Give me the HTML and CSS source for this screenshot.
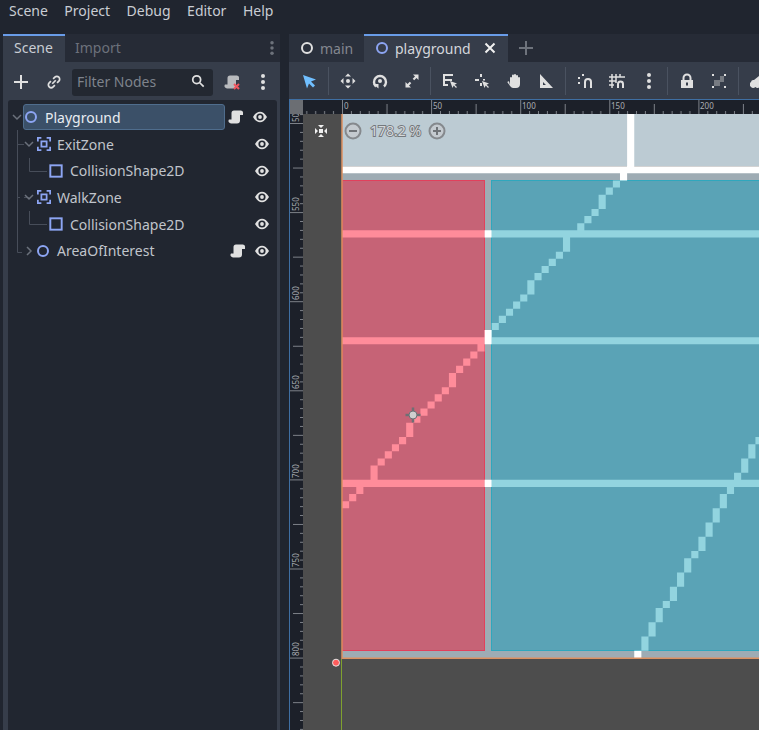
FILE: index.html
```html
<!DOCTYPE html>
<html lang="en">
    <head>
        <meta charset="UTF-8">
        <title>playground</title>
        <link rel="stylesheet" href="styles.css">
    </head>
    <body>
        <svg class="defs" width="0" height="0">
            <defs>
                <symbol id="eye" viewBox="0 0 16 16">
                    <path fill-rule="evenodd" d="M1 8c2-3.6 4.500-5.300 7-5.300s5 1.700 7 5.300c-2 3.600-4.500 5.300-7 5.300S3 11.600 1 8zm7-3.600a3.600 3.600 0 1 0 0 7.200 3.600 3.600 0 0 0 0-7.200z"/>
                    <circle cx="8" cy="8" r="1.900"/>
                </symbol>
                <symbol id="script" viewBox="0 0 16 16">
                    <path d="M6 1.500h7a2.500 2.500 0 0 1 2 3v1.500h-3v5.500a3 3 0 0 1-3 3H3a2.500 2.500 0 0 1-2.300-3.500l.3-.5h2.500V4a2.500 2.500 0 0 1 2.500-2.500z"/>
                </symbol>
                <symbol id="area" viewBox="0 0 16 16">
                    <path fill="none" stroke="#8da5f3" stroke-width="2" d="M1 5V1h4M11 1h4v4M15 11v4h-4M5 15H1v-4M5 5h6v6H5z"/>
                </symbol>
                <symbol id="shape" viewBox="0 0 16 16">
                    <rect x="1.500" y="1.500" width="13" height="13" fill="none" stroke="#8da5f3" stroke-width="2.200"/>
                </symbol>
                <symbol id="dots" viewBox="0 0 16 16">
                    <circle cx="8" cy="2" r="2"/>
                    <circle cx="8" cy="8" r="2"/>
                    <circle cx="8" cy="14" r="2"/>
                </symbol>
            </defs>
        </svg>

        <div class="menu">
            <span>Scene</span>
            <span>Project</span>
            <span>Debug</span>
            <span>Editor</span>
            <span>Help</span>
        </div>

        <div class="main">
            <!-- scene dock -->
            <div class="dock">
                <div class="dock-tabs">
                    <div class="dock-tab active">Scene</div>
                    <div class="dock-tab">Import</div>
                    <svg class="ico dock-menu"><use href="#dots"/></svg>
                </div>
                <div class="scene-tools">
                    <svg class="plus" viewBox="0 0 16 16"><path d="M7 1h2v6h6v2H9v6H7V9H1V7h6z"/></svg>
                    <svg class="link" viewBox="0 0 16 16"><path fill="none" stroke-width="2" d="M7 4.500l2-2a3 3 0 0 1 4.500 4.500l-2 2M9 11.500l-2 2A3 3 0 0 1 2.500 9l2-2M6 10l4-4"/></svg>
                    <div class="filter">
                        <span>Filter Nodes</span>
                        <svg class="ico" viewBox="0 0 16 16"><path fill="none" stroke-width="2" d="M10 10l4.500 4.500M11 6.500a4.500 4.500 0 1 1-9 0 4.500 4.500 0 0 1 9 0z"/></svg>
                    </div>
                    <svg class="ico script-x" viewBox="0 0 16 16">
                        <use href="#script"/>
                        <path class="red-x" d="M10 10l5 5M15 10l-5 5"/>
                    </svg>
                    <svg class="ico more"><use href="#dots"/></svg>
                </div>
                <div class="tree">
                    <svg class="guides" width="60" height="160">
                        <path d="M9.500 30v122.500H14M9.500 44.500H16M21.500 58v13.500H39M21.500 97.500H16M9.500 97.500H12M21.500 111v13.500H39"/>
                    </svg>
                    <div class="row selected">
                        <svg class="chev" viewBox="0 0 10 10"><path d="M1 3l4 4 4-4"/></svg>
                        <span class="pick">
                            <i class="ring"></i>
                            <span>Playground</span>
                        </span>
                        <svg class="ico script"><use href="#script"/></svg>
                        <svg class="ico eye"><use href="#eye"/></svg>
                    </div>
                    <div class="row depth1">
                        <svg class="chev" viewBox="0 0 10 10"><path d="M1 3l4 4 4-4"/></svg>
                        <svg class="node"><use href="#area"/></svg>
                        <span class="name">ExitZone</span>
                        <svg class="ico eye"><use href="#eye"/></svg>
                    </div>
                    <div class="row depth2">
                        <svg class="node"><use href="#shape"/></svg>
                        <span class="name">CollisionShape2D</span>
                        <svg class="ico eye"><use href="#eye"/></svg>
                    </div>
                    <div class="row depth1">
                        <svg class="chev" viewBox="0 0 10 10"><path d="M1 3l4 4 4-4"/></svg>
                        <svg class="node"><use href="#area"/></svg>
                        <span class="name">WalkZone</span>
                        <svg class="ico eye"><use href="#eye"/></svg>
                    </div>
                    <div class="row depth2">
                        <svg class="node"><use href="#shape"/></svg>
                        <span class="name">CollisionShape2D</span>
                        <svg class="ico eye"><use href="#eye"/></svg>
                    </div>
                    <div class="row depth1">
                        <svg class="chev" viewBox="0 0 10 10"><path d="M3 1l4 4-4 4"/></svg>
                        <i class="ring node-ring"></i>
                        <span class="name">AreaOfInterest</span>
                        <svg class="ico script"><use href="#script"/></svg>
                        <svg class="ico eye"><use href="#eye"/></svg>
                    </div>
                </div>
            </div>

            <!-- editor -->
            <div class="editor">
                <div class="scene-tabs">
                    <div class="scene-tab">
                        <i class="ring white"></i>
                        <span>main</span>
                    </div>
                    <div class="scene-tab active">
                        <i class="ring"></i>
                        <span>playground</span>
                        <svg class="close" viewBox="0 0 12 12"><path d="M1.500 1.500l9 9M10.500 1.500l-9 9"/></svg>
                    </div>
                    <svg class="add-tab" viewBox="0 0 16 16"><path d="M7 1h2v6h6v2H9v6H7V9H1V7h6z"/></svg>
                </div>

                <div class="toolbar">
                    <div class="tool"><svg class="blue" viewBox="0 0 16 16"><path d="M2 2l13 4.500-5 2 4 4-2 2-4-4-2 5z"/></svg></div>
                    <i class="sep"></i>
                    <div class="tool"><svg viewBox="0 0 16 16"><path d="M8 .5l3 3H5zM8 15.500l-3-3h6zM.5 8l3-3v6zM15.500 8l-3 3V5z"/><circle cx="8" cy="8" r="2"/></svg></div>
                    <div class="tool"><svg viewBox="0 0 16 16"><path fill="none" stroke="#e0e0e0" stroke-width="2.400" d="M12 13.500a6 6 0 1 0-8 0"/><path d="M1 11h5.500v4.500z"/><circle cx="8" cy="8" r="2"/></svg></div>
                    <div class="tool"><svg viewBox="0 0 16 16"><path d="M9 1.500h5.500V7l-2-2-2.300 2.300-1.500-1.500L11 3.500zM7 14.500H1.500V9l2 2 2.300-2.300 1.500 1.500L5 12.500z"/></svg></div>
                    <i class="sep"></i>
                    <div class="tool"><svg viewBox="0 0 16 16"><path d="M1 1h10v2H3v3h7v2H3v3h3v2H1z"/><path d="M8 8l7 2.500-2.500 1.200 2.500 2.300-1 1-2.300-2.500L10.500 15z"/></svg></div>
                    <div class="tool"><svg viewBox="0 0 16 16"><path d="M6 1h2v3H6zM1 6h4v2H1zM6 10h2v3H6zM9 6h2v1.500H9z"/><path d="M8 8l7 2.500-2.500 1.200 2.500 2.300-1 1-2.300-2.500L10.500 15z"/></svg></div>
                    <div class="tool"><svg viewBox="0 0 16 16"><path d="M4 12V5a1 1 0 0 1 2 0V2.500a1 1 0 0 1 2 0V2a1 1 0 0 1 2 0v1a1 1 0 0 1 2 0v2a1 1 0 0 1 2 0v6a4 4 0 0 1-4 4H7a3 3 0 0 1-2.500-1.500L1.500 9.500a1 1 0 0 1 1.600-1z"/></svg></div>
                    <div class="tool"><svg viewBox="0 0 16 16"><path fill-rule="evenodd" d="M2 1l13 14H2zM5 9v3h3z"/></svg></div>
                    <i class="sep"></i>
                    <div class="tool"><svg viewBox="0 0 16 16"><path fill="none" stroke="#e0e0e0" stroke-width="2" d="M8 15V9a3 3 0 0 1 6 0v6"/><path d="M1 4h2v2H1zM5 1h2v2H5zM1 9h2v2H1z"/></svg></div>
                    <div class="tool"><svg viewBox="0 0 16 16"><path fill="none" stroke="#e0e0e0" stroke-width="1.500" d="M3 1v14M7 1v9M11 1v3M0 4h16M0 8h7M0 12h5"/><path fill="none" stroke="#e0e0e0" stroke-width="2" d="M9 15v-4a2.500 2.500 0 0 1 5 0v4"/></svg></div>
                    <div class="tool"><svg viewBox="0 0 16 16"><use href="#dots"/></svg></div>
                    <i class="sep"></i>
                    <div class="tool"><svg viewBox="0 0 16 16"><path fill="none" stroke="#e0e0e0" stroke-width="2" d="M4.500 8V5a3.500 3.500 0 0 1 7 0v3"/><path fill-rule="evenodd" d="M2 7h12v8H2zM7 9.500v3h2v-3z"/></svg></div>
                    <div class="tool"><svg viewBox="0 0 16 16"><path class="dim" d="M3 7h6V3h4v6H9v4H3z"/><path d="M1 1h2v2H1zM13 1h2v2h-2zM1 13h2v2H1zM13 13h2v2h-2z"/></svg></div>
                    <i class="sep"></i>
                    <div class="tool"><svg viewBox="0 0 16 16"><path d="M1 9a2.500 2.500 0 0 1 3-2l5-4a2.500 2.500 0 0 1 4 1 2.500 2.500 0 0 1 1 4l-4 5a2.500 2.500 0 0 1-4.500 1 2.500 2.500 0 0 1-4.500-5z"/></svg></div>
                </div>

                <svg class="view" viewBox="289 99 470 631">
                    <defs>
                        <pattern id="ticks-x" patternUnits="userSpaceOnUse" x="342" y="100" width="89.100" height="14">
                            <path class="tick" d="M.5 0v14M9.400 11v3M18.300 11v3M27.200 11v3M36.100 11v3M45 4v10M53.900 11v3M62.800 11v3M71.700 11v3M80.600 11v3"/>
                        </pattern>
                        <pattern id="ticks-y" patternUnits="userSpaceOnUse" x="289" y="123" width="14" height="89.100">
                            <path class="tick" d="M0 .5h14M11 9.400h3M11 18.300h3M11 27.200h3M11 36.100h3M4 45h10M11 53.900h3M11 62.800h3M11 71.700h3M11 80.600h3"/>
                        </pattern>
                    </defs>

                    <!-- canvas -->
                    <rect x="303" y="114" width="456" height="616" fill="#4d4d4d"/>
                    <rect x="342" y="114" width="417" height="52" fill="#bccbd3"/>
                    <rect x="342" y="173" width="417" height="485" fill="#9eacb4"/>
                    <rect class="zone-red" x="342.500" y="180.500" width="142" height="470"/>
                    <rect class="zone-teal" x="491.500" y="180.500" width="268" height="470"/>

                    <!-- tiles, 1 unit = 1 tile, row r counted up from the bottom edge -->
                    <g transform="translate(342 658) scale(7.128 -7.128)">
                        <path fill="#ff8c9a" d="M0 21h1v1H0zM1 22h1v1H1zM2 23h1v1H2zM0 24h20v1H0zM4 25h1v2H4zM5 27h1v1H5zM6 28h1v1H6zM7 29h1v1H7zM8 30h1v1H8zM9 31h1v2H9zM10 33h1v1h-1zM11 34h1v1h-1zM12 35h1v1h-1zM13 36h1v1h-1zM14 37h1v1h-1zM15 38h1v2h-1zM16 40h1v1h-1zM17 41h1v1h-1zM18 42h1v1h-1zM19 43h1v1h-1zM0 44h20v1H0zM0 59h20v1H0z"/>
                        <path fill="#92d4df" d="M21 24h38v1H21zM21 44h38v1H21zM21 59h38v1H21zM21 46h1v1h-1zM22 47h1v1h-1zM23 48h1v1h-1zM24 49h1v1h-1zM25 50h1v1h-1zM26 51h1v2h-1zM27 53h1v1h-1zM28 54h1v1h-1zM29 55h1v1h-1zM30 56h1v1h-1zM31 57h1v2h-1zM33 60h1v1h-1zM34 61h1v1h-1zM35 62h1v1h-1zM36 63h1v2h-1zM37 65h1v1h-1zM38 66h1v1h-1zM42 1h1v2h-1zM43 3h1v2h-1zM44 5h1v2h-1zM45 7h1v1h-1zM46 8h1v2h-1zM47 10h1v2h-1zM48 12h1v2h-1zM49 14h1v1h-1zM50 15h1v2h-1zM51 17h1v2h-1zM52 19h1v2h-1zM53 21h1v2h-1zM54 23h1v1h-1zM55 25h1v1h-1zM56 26h1v2h-1zM57 28h1v2h-1zM58 30h1v1h-1z"/>
                        <path fill="#fff" d="M0 68h59v1H0zM40 69h1v8h-1zM39 67h1v1h-1zM20 24h1v1h-1zM20 44h1v2h-1zM20 59h1v1h-1zM41 0h1v1h-1z"/>
                    </g>

                    <path class="edge-orange" d="M342 114V658.300H759"/>
                    <path class="edge-green" d="M341.500 659V730"/>

                    <!-- pivot and origin markers -->
                    <g class="pivot">
                        <path d="M413 407.500v15M405.500 415h15"/>
                        <circle cx="413" cy="415" r="4"/>
                    </g>
                    <circle class="origin" cx="336" cy="662.700" r="3.500"/>

                    <!-- zoom widgets -->
                    <path class="fit" d="M318 125h6l-3 3zM318 137h6l-3-3zM315 128v6l3-3zM327 128v6l-3-3zM319 129h4v4h-4z"/>
                    <g class="zoom-btn">
                        <circle cx="353" cy="131" r="7.500"/>
                        <path d="M349 131h8"/>
                    </g>
                    <text class="zoom-text" x="370" y="136">178.2 %</text>
                    <g class="zoom-btn">
                        <circle cx="437" cy="131" r="7.500"/>
                        <path d="M433 131h8M437 127v8"/>
                    </g>

                    <!-- rulers -->
                    <rect class="ruler" x="303" y="100" width="456" height="14"/>
                    <rect class="ruler" x="289" y="114" width="14" height="616"/>
                    <rect x="303" y="100" width="456" height="14" fill="url(#ticks-x)"/>
                    <rect x="289" y="114" width="14" height="616" fill="url(#ticks-y)"/>
                    <text class="num" x="344" y="109">0</text>
                    <text class="num" x="433" y="109">50</text>
                    <text class="num" x="522" y="109">100</text>
                    <text class="num" x="611" y="109">150</text>
                    <text class="num" x="700" y="109">200</text>
                    <text class="num" transform="translate(299 122) rotate(-90)">500</text>
                    <text class="num" transform="translate(299 211) rotate(-90)">550</text>
                    <text class="num" transform="translate(299 300) rotate(-90)">600</text>
                    <text class="num" transform="translate(299 389) rotate(-90)">650</text>
                    <text class="num" transform="translate(299 478) rotate(-90)">700</text>
                    <text class="num" transform="translate(299 567) rotate(-90)">750</text>
                    <text class="num" transform="translate(299 656) rotate(-90)">800</text>
                    <rect x="289" y="100" width="14" height="14" fill="#6b6e73"/>
                    <path class="edge-blue" d="M289 99.500H759M289.500 99V730"/>
                </svg>
            </div>
        </div>
    </body>
</html>
```

FILE: styles.css
```css
* {
    box-sizing: border-box;
}

html, body {
    margin: 0;
    height: 730px;
    overflow: hidden;
}

body {
    background-color: #20252f;
    color: #c9cdd4;
    font-family: "Noto Sans", sans-serif;
    font-size: 14px;
}

svg {
    display: block;
    flex: none;
    fill: #e0e0e0;
}

.defs {
    position: absolute;
}

.ring {
    display: block;
    flex: none;
    width: 12px;
    height: 12px;
    border: 2px solid #8da5f3;
    border-radius: 50%;
}

.ring.white {
    border-color: #e0e0e0;
}

/* menu */
.menu {
    display: flex;
    gap: 16.500px;
    height: 34px;
    padding: 1px 0 0 9px;
    line-height: 20px;
}

.main {
    display: flex;
    height: 696px;
    padding-left: 3px;
}

/* scene dock */
.dock {
    display: flex;
    flex-direction: column;
    width: 277px;
    margin-right: 9px;
    background-color: #363d4a;
    border-radius: 3px 3px 0 0;
}

.dock-tabs {
    display: flex;
    align-items: center;
    height: 28px;
    background-color: #262b36;
}

.dock-tab {
    width: 62px;
    height: 28px;
    padding: 1px 0 0 10px;
    line-height: 22px;
    color: #6c717b;
    border-top: 2px solid transparent;
}

.dock-tab.active {
    padding-left: 11px;
    background-color: #363d4a;
    border-top-color: #699ce8;
    color: #c9cdd4;
}

.dock-menu {
    width: 14px;
    height: 14px;
    margin-left: auto;
    margin-right: 1px;
    fill: #6d727b;
}

.scene-tools {
    display: flex;
    align-items: center;
    height: 38px;
    padding: 2px 0 0 10px;
}

.plus {
    width: 16px;
    height: 16px;
}

.link {
    width: 14px;
    height: 14px;
    margin-left: 18px;
    stroke: #e0e0e0;
    fill: none;
}

.filter {
    display: flex;
    align-items: center;
    justify-content: space-between;
    width: 141px;
    height: 27px;
    margin-left: 11px;
    padding: 0 8px 2px 5px;
    background-color: #232831;
    border-radius: 3px;
    color: #7e838c;
}

.filter .ico {
    width: 14px;
    height: 14px;
    fill: none;
    stroke: #e0e0e0;
}

.script-x {
    width: 16px;
    height: 16px;
    margin-left: 11px;
    fill: #b9bbbe;
}

.red-x {
    fill: none;
    stroke: #f0555f;
    stroke-width: 2;
}

.more {
    width: 16px;
    height: 16px;
    margin-left: 15px;
}

.tree {
    position: relative;
    flex: 1;
    margin: 0 3px 0 5px;
    padding-top: 4px;
    background-color: #212630;
    border-radius: 3px 3px 0 0;
}

.guides {
    position: absolute;
    left: 0;
    top: 0;
    fill: none;
    stroke: #474d59;
}

.row {
    position: relative;
    display: flex;
    align-items: center;
    height: 26.700px;
    padding-right: 7px;
}

.chev {
    width: 10px;
    height: 10px;
    fill: none;
    stroke: #6b717c;
    stroke-width: 1.500;
}

.selected .chev {
    margin-left: 4px;
}

.pick {
    display: flex;
    align-items: center;
    gap: 8px;
    flex: none;
    width: 202px;
    height: 26px;
    margin: 0 3px 0 1px;
    background-color: #3b5068;
    border: 1px solid #4f6d8d;
    border-radius: 3px;
    color: #e8ecf2;
}

.pick .ring {
    margin-left: 1px;
}

.depth1 {
    padding-left: 16px;
}

.depth1 .chev {
    margin-right: 3px;
}

.node {
    width: 14px;
    height: 14px;
    margin-right: 6px;
}

.node-ring {
    margin: 0 8px 0 0;
}

.depth2 {
    padding-left: 41px;
}

.depth2 .node {
    margin-right: 7px;
}

.name {
    flex: 1;
    color: #c0c4cb;
}

.ico.script {
    width: 16px;
    height: 16px;
}

.row .eye {
    width: 16px;
    height: 16px;
    margin-left: 8px;
}

/* editor */
.editor {
    flex: 1;
    min-width: 0;
    display: flex;
    flex-direction: column;
}

.scene-tabs {
    display: flex;
    align-items: center;
    height: 28px;
    background-color: #262b36;
    border-radius: 3px 0 0 0;
}

.scene-tab {
    display: flex;
    align-items: center;
    gap: 7px;
    width: 75px;
    height: 28px;
    padding: 0 0 2px 12px;
    border-top: 2px solid transparent;
    color: #83878f;
    background-color: #2a303c;
}

.scene-tab.active {
    width: 144px;
    background-color: #363d4a;
    border-top-color: #699ce8;
    color: #d4d7dc;
}

.close {
    width: 12px;
    height: 12px;
    margin-left: 6px;
    fill: none;
    stroke: #f0f0f0;
    stroke-width: 2;
}

.add-tab {
    width: 16px;
    height: 16px;
    margin-left: 10px;
    fill: #6e737c;
}

.toolbar {
    display: flex;
    align-items: center;
    width: 490px;
    height: 37px;
    padding-left: 4px;
    background-color: #363d4a;
}

.tool {
    display: flex;
    align-items: center;
    justify-content: center;
    flex: none;
    width: 32px;
    height: 37px;
}

.tool svg {
    width: 16px;
    height: 16px;
}

.tool .blue {
    fill: #70bfff;
}

.tool .dim {
    fill: #777b82;
}

.sep {
    display: block;
    flex: none;
    width: 1px;
    height: 28px;
    margin: 0 2.750px;
    background-color: #4a5260;
}

/* viewport */
.view {
    width: 470px;
    height: 631px;
}

.zone-red {
    fill: #c66376;
    stroke: #e2405c;
}

.zone-teal {
    fill: #5aa3b6;
    stroke: #2fa7bd;
}

.edge-orange {
    fill: none;
    stroke: #dc9060;
    stroke-width: 1.500;
}

.edge-green {
    fill: none;
    stroke: #7fa12f;
}

.edge-blue {
    fill: none;
    stroke: #3f6fa3;
}

.pivot path {
    fill: none;
    stroke: #6f6f74;
    stroke-width: 2.500;
}

.pivot circle {
    fill: #cfcfcf;
    stroke: #6f6f74;
}

.origin {
    fill: #ff5c5c;
    stroke: #e6e6e6;
}

.fit {
    fill: #f0f0f0;
}

.zoom-btn circle {
    fill: #c4cacf;
    stroke: #85898d;
    stroke-width: 2;
}

.zoom-btn path {
    fill: none;
    stroke: #6f7377;
    stroke-width: 2;
}

.zoom-text {
    font-size: 14px;
    fill: #d4d9dc;
    stroke: #74787c;
    stroke-width: 1.800;
    paint-order: stroke;
}

.ruler {
    fill: #1c2029;
}

.tick {
    fill: none;
    stroke: #7d8188;
}

.num {
    font-size: 8px;
    fill: #a9adb3;
}
```
